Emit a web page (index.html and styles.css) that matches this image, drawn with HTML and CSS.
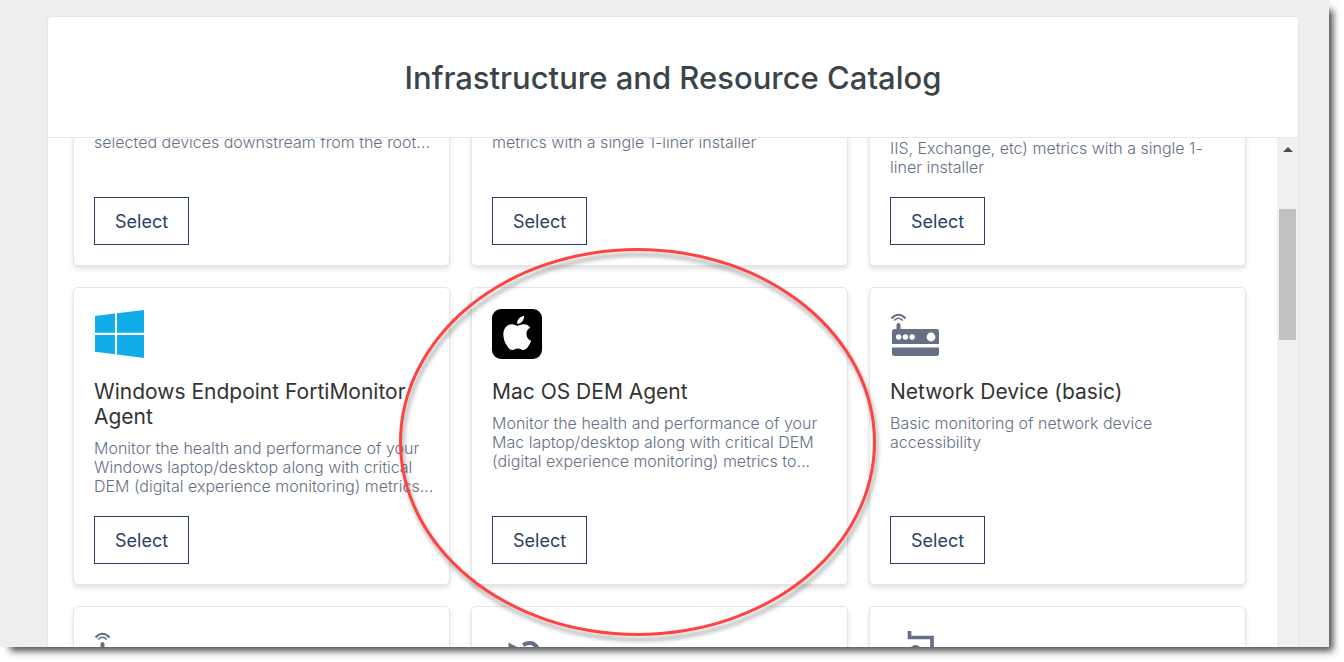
FILE: index.html
```
<!DOCTYPE html>
<html lang="en">
<head>
    <meta charset="UTF-8">
    <meta name="viewport" content="width=device-width, initial-scale=1.0">
    <title>Infrastructure and Resource Catalog</title>
    <link rel="stylesheet" href="styles.css">
</head>
<body>
    <div class="frame">
        <main class="panel">
            <header class="panel-header">
                <h1>Infrastructure and Resource Catalog</h1>
            </header>

            <div class="panel-body">
                <div class="catalog">
                    <!-- Row scrolled partly out of view -->
                    <article class="card card-scrolled">
                        <p>selected devices downstream from the root...</p>
                        <button type="button">Select</button>
                    </article>
                    <article class="card card-scrolled">
                        <p>metrics with a single 1-liner installer</p>
                        <button type="button">Select</button>
                    </article>
                    <article class="card card-scrolled card-scrolled-tall">
                        <p>IIS, Exchange, etc) metrics with a single 1-liner installer</p>
                        <button type="button">Select</button>
                    </article>

                    <article class="card">
                        <svg class="icon" viewBox="0 0 50 50" fill="#10adea" aria-hidden="true">
                            <path d="M1 7L21 4.5V23.7H1zM23 4.2L50 1V23.7H23zM1 26H21V45.2L1 42.7zM23 26H50V49L23 45.5z"/>
                        </svg>
                        <h2>Windows Endpoint FortiMonitor Agent</h2>
                        <p>Monitor the health and performance of your Windows laptop/desktop along with critical DEM (digital experience monitoring) metrics...</p>
                        <button type="button">Select</button>
                    </article>
                    <article class="card card-marked">
                        <svg class="icon" viewBox="0 0 50 50" aria-hidden="true">
                            <rect width="50" height="50" rx="9"/>
                            <path transform="translate(8.2 7) scale(1.417)" fill="#fff" d="M12.152 6.896c-.948 0-2.415-1.078-3.96-1.04-2.04.027-3.91 1.183-4.961 3.014-2.117 3.675-.546 9.103 1.519 12.09 1.013 1.454 2.208 3.09 3.792 3.039 1.52-.065 2.09-.987 3.935-.987 1.831 0 2.35.987 3.96.948 1.637-.026 2.676-1.48 3.676-2.948 1.156-1.688 1.636-3.325 1.662-3.415-.039-.013-3.182-1.221-3.22-4.857-.026-3.04 2.48-4.494 2.597-4.559-1.429-2.09-3.623-2.324-4.39-2.376-2-.156-3.675 1.09-4.61 1.09zM15.53 3.83c.843-1.012 1.4-2.427 1.245-3.83-1.207.052-2.662.805-3.532 1.818-.78.896-1.454 2.338-1.273 3.714 1.338.104 2.715-.688 3.559-1.701"/>
                        </svg>
                        <h2>Mac OS DEM Agent</h2>
                        <p>Monitor the health and performance of your Mac laptop/desktop along with critical DEM (digital experience monitoring) metrics to...</p>
                        <button type="button">Select</button>
                        <span class="marker"></span>
                    </article>
                    <article class="card">
                        <svg class="icon" viewBox="0 0 50 50" fill="#667085" aria-hidden="true">
                            <path d="M1.5 9.5Q8.5 2 15.5 9.5" fill="none" stroke="#667085" stroke-width="2.2"/>
                            <path d="M4.2 11.5Q8.5 7 12.8 11.5" fill="none" stroke="#667085" stroke-width="1.5"/>
                            <path d="M6.5 21V16a2 2 0 0 1 4 0V21z"/>
                            <path d="M4.5 20H46.5a2.500 2.500 0 0 1 2.500 2.500V35H2V22.5A2.5 2.5 0 0 1 4.5 20zM2 38.5H49V44.5a2.5 2.5 0 0 1-2.5 2.5H4.5a2.5 2.5 0 0 1-2.5-2.5z"/>
                            <g fill="#fff">
                                <circle cx="8.7" cy="28" r="2.7"/>
                                <circle cx="15.4" cy="28" r="2.7"/>
                                <circle cx="22.1" cy="28" r="2.7"/>
                                <circle cx="41" cy="28" r="4.4"/>
                            </g>
                        </svg>
                        <h2>Network Device (basic)</h2>
                        <p>Basic monitoring of network device accessibility</p>
                        <button type="button">Select</button>
                    </article>

                    <!-- Next row, only the icon tops are visible -->
                    <article class="card">
                        <svg class="icon" viewBox="0 0 50 50" fill="#667085" aria-hidden="true">
                            <path d="M1.5 9.5Q8.5 2 15.5 9.5" fill="none" stroke="#667085" stroke-width="2.2"/>
                            <path d="M4.2 11.5Q8.5 7 12.8 11.5" fill="none" stroke="#667085" stroke-width="1.5"/>
                            <path d="M6.5 21V16a2 2 0 0 1 4 0V21z"/>
                        </svg>
                    </article>
                    <article class="card">
                        <svg class="icon" viewBox="0 0 50 50" fill="#667085" aria-hidden="true">
                            <path d="M16.5 14.5L27 20H16.5z"/>
                            <path d="M31 17Q41 11.5 46 21" fill="none" stroke="#667085" stroke-width="4"/>
                        </svg>
                    </article>
                    <article class="card">
                        <svg class="icon" viewBox="0 0 50 50" fill="#667085" aria-hidden="true">
                            <path d="M19.5 3V9.5H42V22" fill="none" stroke="#667085" stroke-width="3.7"/>
                            <circle cx="25.5" cy="23" r="6"/>
                        </svg>
                    </article>
                </div>

                <div class="scrollbar">
                    <span class="scroll-up"></span>
                    <span class="scroll-thumb"></span>
                </div>
            </div>
        </main>
    </div>
</body>
</html>
```
FILE: styles.css
```
:root {
    --slate: #667085;
    --navy: #2a3f63;
    --line: #e5e6e7;
}

* {
    box-sizing: border-box;
}

body {
    margin: 0;
    height: 100vh;
    padding: 0 15px 15px 0;
    background: #fff;
    font-family: Inter, "Liberation Sans", sans-serif;
    overflow: hidden;
}

.frame {
    display: flex;
    height: 100%;
    padding: 16px 30px 0 47px;
    background: #edeef0;
    box-shadow: 7px 7px 7px -3px rgba(0, 0, 0, 0.7);
}

.panel {
    display: flex;
    flex: 1;
    flex-direction: column;
    min-height: 0;
    border: 1px solid var(--line);
    border-bottom: 0;
    border-radius: 5px 5px 0 0;
    background: #fff;
    overflow: hidden;
}

.panel-header {
    padding: 41px 20px 39px;
    border-bottom: 1px solid var(--line);
    text-align: center;
}

h1 {
    margin: 0;
    color: #3b4448;
    font-size: 31px;
    font-weight: 450;
    line-height: 40px;
}

.panel-body {
    display: flex;
    flex: 1;
    min-height: 0;
    overflow: hidden;
}

.catalog {
    display: grid;
    flex: 1;
    grid-template-columns: repeat(3, 1fr);
    align-content: start;
    gap: 21px;
    margin-top: -8px;
    padding: 0 31px 0 25px;
}

.card {
    position: relative;
    display: flex;
    flex-direction: column;
    align-items: flex-start;
    min-height: 298px;
    padding: 21px 15px 20px 20px;
    border: 1px solid var(--line);
    border-radius: 5px;
    background: #fff;
    box-shadow: 0 3px 5px rgba(0, 0, 0, 0.12);
}

.card-scrolled {
    min-height: 136px;
    padding-top: 2px;
}

.card-scrolled-tall {
    padding-top: 8px;
}

.icon {
    flex: none;
    width: 50px;
    height: 50px;
    margin-bottom: 20px;
}

h2 {
    margin: 0 0 10px;
    color: #333;
    font-size: 21px;
    font-weight: 400;
    line-height: 25px;
}

p {
    margin: 0;
    color: var(--slate);
    font-size: 16px;
    font-weight: 300;
    line-height: 19px;
}

button {
    height: 48px;
    margin-top: auto;
    padding: 0 20px;
    border: 1px solid var(--navy);
    background: #fff;
    color: var(--navy);
    font-family: inherit;
    font-size: 18px;
}

/* Highlight drawn around the Mac agent */
.card-marked {
    z-index: 1;
}

.marker {
    position: absolute;
    inset: -40px -29px -52px -73px;
    border: 3px solid #ff4242;
    border-radius: 50%;
    filter: drop-shadow(2px 5px 2px rgba(0, 0, 0, 0.35));
    pointer-events: none;
}

.scrollbar {
    display: flex;
    flex: none;
    flex-direction: column;
    align-items: center;
    width: 21px;
    padding-top: 9px;
    background: #f0f0f0;
}

.scroll-up {
    border: 5px solid transparent;
    border-top: 0;
    border-bottom-color: #4d4d4d;
}

.scroll-thumb {
    width: 17px;
    height: 131px;
    margin-top: 57px;
    background: #c1c1c1;
}
```
